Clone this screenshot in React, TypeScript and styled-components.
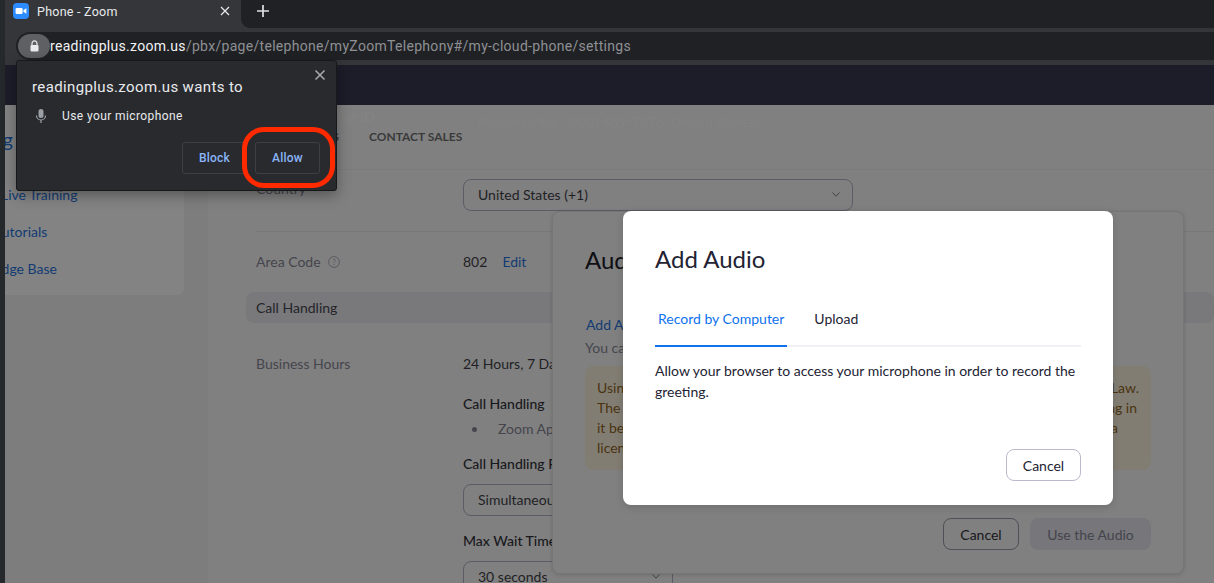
import React from "react";
import styled, { createGlobalStyle } from "styled-components";

const Global = createGlobalStyle`
  html, body { margin: 0; padding: 0; background: #808080; }
  body { width: 1214px; height: 583px; overflow: hidden; font-family: Lato, "Liberation Sans", sans-serif; }
  * { box-sizing: border-box; }
`;

const Screen = styled.div`
  position: relative;
  width: 1214px;
  height: 583px;
  overflow: hidden;
  display: flex;
  background: #7d7d7d;
`;
const DesktopEdge = styled.div`
  width: 5px;
  flex: none;
  background: #25292c;
  position: relative;
  z-index: 2;
`;
const Browser = styled.div`
  flex: 1;
  min-width: 0;
  display: flex;
  flex-direction: column;
`;
const TabStrip = styled.div`
  height: 28px;
  flex: none;
  display: flex;
  background: #35363a;
`;
const Tab = styled.div`
  width: 236px;
  height: 28px;
  flex: none;
  display: flex;
  align-items: center;
  padding: 0 11px 6px 8px;
  color: #e8eaed;
  font: 12.5px Roboto, sans-serif;
  letter-spacing: 0.25px;
`;
const TabTitle = styled.span`
  flex: 1;
  margin-left: 8px;
`;
const TabRest = styled.div`
  flex: 1;
  background: #202124;
  border-radius: 0 0 0 9px;
  padding: 5px 0 0 16px;
  display: flex;
  color: #dee1e6;
`;
const Toolbar = styled.div`
  height: 37px;
  flex: none;
  padding: 4px 0 5px 11px;
  background: #35363a;
`;
const Omnibox = styled.div`
  height: 28px;
  background: #202124;
  border-radius: 14px 0 0 14px;
  display: flex;
  align-items: center;
  padding-left: 2px;
  font: 14px Roboto, sans-serif;
  letter-spacing: 0.3px;
  color: #8e9094;
  white-space: nowrap;
`;
const LockPill = styled.div`
  width: 32px;
  height: 24px;
  border-radius: 12px;
  background: #5f6063;
  display: flex;
  align-items: center;
  justify-content: center;
  color: #e8eaed;
`;
const Host = styled.span`
  color: #f1f3f4;
`;
const TopNav = styled.div`
  height: 40px;
  flex: none;
  background: #1c1d29;
`;
const Content = styled.div`
  flex: 1;
  min-height: 0;
  display: flex;
`;
const Sidebar = styled.div`
  width: 179px;
  height: 190px;
  flex: none;
  background: #838383;
  border-radius: 0 0 6px 0;
  padding-top: 22px;
  display: flex;
  flex-direction: column;
  overflow: hidden;
`;
const SideHeading = styled.div`
  margin-left: -67px;
  color: #123b73;
  font-size: 20px;
  line-height: 24px;
  height: 24px;
  margin-bottom: 36px;
  white-space: nowrap;
`;
const SideLinks = styled.div`
  display: flex;
  flex-direction: column;
  gap: 21px;
`;
const SideLink = styled.a<{ $shift: number }>`
  color: #123b73;
  font-size: 14px;
  line-height: 16px;
  white-space: nowrap;
  margin-left: ${(p) => p.$shift}px;
`;
const Main = styled.div`
  margin-left: 24px;
  flex: 1;
  background: #808080;
  display: flex;
  flex-direction: column;
  position: relative;
  overflow: hidden;
`;
const FaintRow = styled.div`
  position: absolute;
  top: 8px;
  left: 270px;
  color: #838383;
  font-size: 14px;
  white-space: nowrap;
`;
const FaintLabel = styled.div`
  position: absolute;
  top: 3px;
  left: 90px;
  width: 77px;
  text-align: right;
  color: #848484;
  font-size: 14px;
  white-space: nowrap;
`;
const Tabs = styled.div`
  height: 65px;
  flex: none;
  border-bottom: 1px solid #7b7b7b;
  padding-top: 24px;
  display: flex;
  gap: 30px;
  font-size: 12px;
  font-weight: 700;
  line-height: 16px;
  color: #3a3a3a;
`;
const NavItem = styled.div<{ $w?: number }>`
  width: ${(p) => (p.$w ? `${p.$w}px` : "auto")};
  text-align: right;
  white-space: nowrap;
`;
const Form = styled.div`
  padding: 9px 0 0 48px;
`;
const Row = styled.div<{ $h: number }>`
  display: flex;
  height: ${(p) => p.$h}px;
  align-items: flex-start;
`;
const Label = styled.div`
  width: 207px;
  flex: none;
  font-size: 14px;
  line-height: 20px;
  color: #45454d;
  display: flex;
  align-items: center;
  gap: 7px;
`;
const Value = styled.div`
  font-size: 14px;
  line-height: 20px;
  color: #1f1f24;
  white-space: nowrap;
  display: flex;
  gap: 15px;
`;
const EditLink = styled.a`
  color: #123b73;
`;
const SelectBox = styled.div<{ $w: number }>`
  width: ${(p) => p.$w}px;
  height: 32px;
  flex: none;
  border: 1px solid #5c5c66;
  border-radius: 8px;
  display: flex;
  align-items: center;
  justify-content: space-between;
  padding: 0 12px 1px 14px;
  font-size: 14px;
  color: #1f1f24;
  white-space: nowrap;
`;
const Divider = styled.div`
  height: 1px;
  background: #787878;
  margin-bottom: 20px;
`;
const Section = styled.div`
  margin-left: -10px;
  height: 31px;
  background: #79797b;
  border-radius: 8px;
  padding-left: 10px;
  display: flex;
  align-items: center;
  font-size: 14px;
  color: #24242a;
  margin-bottom: 31px;
`;
const Stack = styled.div`
  display: flex;
  flex-direction: column;
  width: 260px;
`;
const SubTitle = styled.div<{ $top: number }>`
  font-size: 14px;
  font-weight: 500;
  line-height: 20px;
  color: #18181c;
  margin-top: ${(p) => p.$top}px;
  white-space: nowrap;
`;
const Bullet = styled.div`
  margin: 5px 0 0 35px;
  font-size: 14px;
  line-height: 20px;
  color: #45454d;
  white-space: nowrap;
  position: relative;
  &::before {
    content: "";
    position: absolute;
    left: -26px;
    top: 8px;
    width: 5px;
    height: 5px;
    border-radius: 50%;
    background: #45454d;
  }
`;
const StackedSelect = styled(SelectBox)`
  margin-top: 10px;
`;

const AudioPanel = styled.div`
  position: absolute;
  left: 552px;
  top: 211px;
  width: 632px;
  height: 363px;
  background: #808080;
  border: 1px solid #767676;
  border-radius: 8px;
  box-shadow: 0 1px 4px rgba(0, 0, 0, 0.15);
  padding: 33px 32px 0;
  font-size: 14px;
  display: flex;
  flex-direction: column;
`;
const PanelTitle = styled.div`
  font-size: 24px;
  line-height: 30px;
  color: #0f0f14;
`;
const PanelLink = styled.div`
  margin: 40px 0 0 1px;
  color: #123b73;
  line-height: 20px;
`;
const PanelNote = styled.div`
  margin-top: 3px;
  color: #45454d;
  line-height: 20px;
`;
const Warning = styled.div`
  margin-top: 8px;
  width: 566px;
  height: 104px;
  border-radius: 8px;
  background: #827d73;
  padding: 12px 12px;
  color: #4a3410;
  line-height: 20px;
`;
const WarningLine = styled.div<{ $end?: number }>`
  display: flex;
  justify-content: space-between;
  white-space: nowrap;
  padding-right: ${(p) => p.$end ?? 0}px;
`;
const PanelActions = styled.div`
  margin-top: 48px;
  display: flex;
  justify-content: flex-end;
  gap: 11px;
`;
const OutlineBtn = styled.div`
  width: 76px;
  height: 32px;
  border-radius: 8px;
  border: 1px solid #4f4f57;
  display: flex;
  align-items: center;
  justify-content: center;
  font-size: 14px;
  color: #17171c;
`;
const DisabledBtn = styled.div`
  width: 121px;
  height: 32px;
  border-radius: 8px;
  background: #76767b;
  display: flex;
  align-items: center;
  justify-content: center;
  font-size: 14px;
  color: #45454c;
`;

const Dialog = styled.div`
  position: absolute;
  left: 623px;
  top: 211px;
  width: 490px;
  height: 294px;
  background: #fff;
  border-radius: 8px;
  padding: 32px 32px 24px;
  display: flex;
  flex-direction: column;
  box-shadow: 0 2px 8px rgba(0, 0, 0, 0.15);
`;
const DialogTitle = styled.div`
  font-size: 24px;
  line-height: 32px;
  color: #232333;
`;
const DialogTabs = styled.div`
  margin-top: 30px;
  display: flex;
  height: 42px;
  border-bottom: 2px solid #f0f0f5;
`;
const DialogTab = styled.div<{ $active?: boolean }>`
  height: 42px;
  padding: 4px 3px 0;
  margin-right: ${(p) => (p.$active ? "24px" : "0")};
  font-size: 14px;
  line-height: 20px;
  color: ${(p) => (p.$active ? "#0e72ed" : "#232333")};
  border-bottom: 2px solid ${(p) => (p.$active ? "#0e72ed" : "transparent")};
`;
const DialogText = styled.div`
  margin-top: 13px;
  font-size: 14px;
  line-height: 21px;
  color: #232333;
`;
const DialogFooter = styled.div`
  margin-top: auto;
  display: flex;
  justify-content: flex-end;
`;
const CancelBtn = styled.div`
  width: 75px;
  height: 32px;
  border: 1px solid #babacc;
  border-radius: 8px;
  background: #fff;
  display: flex;
  align-items: center;
  justify-content: center;
  font-size: 14px;
  color: #232333;
`;

const Prompt = styled.div`
  position: absolute;
  left: 16px;
  top: 60px;
  width: 321px;
  height: 131px;
  background: #292a2d;
  border: 1px solid #17181a;
  border-radius: 3px;
  box-shadow: 0 4px 14px rgba(0, 0, 0, 0.35);
  padding: 16px 15px 0;
  font-family: Roboto, sans-serif;
  color: #e8eaed;
  z-index: 5;
`;
const PromptClose = styled.div`
  position: absolute;
  right: 10px;
  top: 8px;
  display: flex;
  color: #a8abaf;
`;
const PromptTitle = styled.div`
  font-size: 15px;
  line-height: 20px;
  letter-spacing: 0.37px;
`;
const PromptRow = styled.div`
  margin-top: 10px;
  display: flex;
  align-items: center;
  gap: 14px;
  font-size: 12px;
  letter-spacing: 0.4px;
  line-height: 18px;
  color: #e8eaed;
  padding-left: 2px;
`;
const PromptButtons = styled.div`
  position: absolute;
  right: 16px;
  bottom: 16px;
  display: flex;
  gap: 8px;
`;
const PromptBtn = styled.div`
  width: 65px;
  height: 32px;
  border: 1px solid #3c4043;
  border-radius: 3px;
  display: flex;
  align-items: center;
  justify-content: center;
  font-size: 12px;
  font-weight: 500;
  letter-spacing: 0.2px;
  color: #8ab4f8;
`;
const Highlight = styled.div`
  position: absolute;
  left: 242px;
  top: 127px;
  width: 93px;
  height: 61px;
  border: 5px solid #ff2a00;
  border-radius: 22px;
  z-index: 6;
`;

const Chevron = () => (
  <svg width="8" height="5" viewBox="0 0 8 5" fill="none" stroke="#3a3a42" strokeWidth="0.9">
    <path d="M0.5 0.5L4 4.2 7.5 0.5" />
  </svg>
);

export default function App() {
  return (
    <Screen>
      <Global />
      <DesktopEdge />
      <Browser>
        <TabStrip>
          <Tab>
            <svg width="16" height="16" viewBox="0 0 16 16">
              <rect width="16" height="16" rx="4" fill="#2d8cff" />
              <rect x="2.6" y="5" width="7" height="6" rx="1.2" fill="#fff" />
              <path d="M10.4 7.2l3-1.9v5.4l-3-1.9z" fill="#fff" />
            </svg>
            <TabTitle>Phone - Zoom</TabTitle>
            <svg width="10" height="10" viewBox="0 0 10 10" stroke="#e8eaed" strokeWidth="1.2">
              <path d="M1 1l8 8M9 1l-8 8" />
            </svg>
          </Tab>
          <TabRest>
            <svg width="12" height="12" viewBox="0 0 12 12" stroke="currentColor" strokeWidth="1.7">
              <path d="M6 0v12M0 6h12" />
            </svg>
          </TabRest>
        </TabStrip>
        <Toolbar>
          <Omnibox>
            <LockPill>
              <svg width="9" height="12" viewBox="0 0 9 12">
                <path d="M2 5V3.4a2.5 2.5 0 0 1 5 0V5" fill="none" stroke="currentColor" strokeWidth="1.2" />
                <rect x="0.5" y="5" width="8" height="6.5" rx="1" fill="currentColor" />
              </svg>
            </LockPill>
            <Host>readingplus.zoom.us</Host>/pbx/page/telephone/myZoomTelephony#/my-cloud-phone/settings
          </Omnibox>
        </Toolbar>
        <TopNav />
        <Content>
          <Sidebar>
            <SideHeading>Learning</SideHeading>
            <SideLinks>
              <SideLink $shift={-4}>Live Training</SideLink>
              <SideLink $shift={-10}>Tutorials</SideLink>
              <SideLink $shift={-50}>Knowledge Base</SideLink>
            </SideLinks>
          </Sidebar>
          <Main>
            <FaintLabel>Caller ID</FaintLabel>
            <FaintRow>Reading Plus &nbsp; (802) 489-7576 (United States)</FaintRow>
            <Tabs>
              <NavItem $w={131}>PLANS &amp; PRICING</NavItem>
              <NavItem>CONTACT SALES</NavItem>
            </Tabs>
            <Form>
              <Row $h={52}>
                <Label>Country</Label>
                <SelectBox $w={390}>
                  United States (+1)
                  <Chevron />
                </SelectBox>
              </Row>
              <Divider />
              <Row $h={40}>
                <Label>
                  Area Code
                  <svg width="12" height="12" viewBox="0 0 12 12" fill="none" stroke="#5a5a62">
                    <circle cx="6" cy="6" r="5.4" />
                    <text x="6" y="8.8" fontSize="8" textAnchor="middle" fill="#5a5a62" stroke="none">?</text>
                  </svg>
                </Label>
                <Value>
                  802 <EditLink>Edit</EditLink>
                </Value>
              </Row>
              <Section>Call Handling</Section>
              <Row $h={230}>
                <Label>Business Hours</Label>
                <Stack>
                  <Value>24 Hours, 7 Days</Value>
                  <SubTitle $top={20}>Call Handling</SubTitle>
                  <Bullet>Zoom Apps</Bullet>
                  <SubTitle $top={15}>Call Handling Policy</SubTitle>
                  <StackedSelect $w={210}>Simultaneous</StackedSelect>
                  <SubTitle $top={15}>Max Wait Time</SubTitle>
                  <StackedSelect $w={210}>
                    30 seconds
                    <Chevron />
                  </StackedSelect>
                </Stack>
              </Row>
            </Form>
          </Main>
        </Content>
      </Browser>

      <AudioPanel>
        <PanelTitle>Audio</PanelTitle>
        <PanelLink>Add Audio</PanelLink>
        <PanelNote>You can</PanelNote>
        <Warning>
          <WarningLine>
            <span>Using</span>
            <span>Law.</span>
          </WarningLine>
          <WarningLine $end={2}>
            <span>The</span>
            <span>ng in</span>
          </WarningLine>
          <WarningLine $end={21}>
            <span>it be</span>
            <span>a</span>
          </WarningLine>
          <WarningLine>
            <span>license</span>
          </WarningLine>
        </Warning>
        <PanelActions>
          <OutlineBtn>Cancel</OutlineBtn>
          <DisabledBtn>Use the Audio</DisabledBtn>
        </PanelActions>
      </AudioPanel>

      <Dialog>
        <DialogTitle>Add Audio</DialogTitle>
        <DialogTabs>
          <DialogTab $active>Record by Computer</DialogTab>
          <DialogTab>Upload</DialogTab>
        </DialogTabs>
        <DialogText>Allow your browser to access your microphone in order to record the greeting.</DialogText>
        <DialogFooter>
          <CancelBtn>Cancel</CancelBtn>
        </DialogFooter>
      </Dialog>

      <Prompt>
        <PromptClose>
          <svg width="12" height="12" viewBox="0 0 12 12" stroke="currentColor" strokeWidth="1.5">
            <path d="M1.5 1.5l9 9M10.5 1.5l-9 9" />
          </svg>
        </PromptClose>
        <PromptTitle>readingplus.zoom.us wants to</PromptTitle>
        <PromptRow>
          <svg width="14" height="16" viewBox="0 0 14 16" fill="#9aa0a6">
            <rect x="4.5" y="1" width="5" height="9" rx="2.5" />
            <path d="M2.5 7.5a4.5 4.5 0 0 0 9 0" fill="none" stroke="#9aa0a6" strokeWidth="1.2" />
            <rect x="6.4" y="12" width="1.2" height="3" />
          </svg>
          Use your microphone
        </PromptRow>
        <PromptButtons>
          <PromptBtn>Block</PromptBtn>
          <PromptBtn>Allow</PromptBtn>
        </PromptButtons>
      </Prompt>
      <Highlight />
    </Screen>
  );
}
